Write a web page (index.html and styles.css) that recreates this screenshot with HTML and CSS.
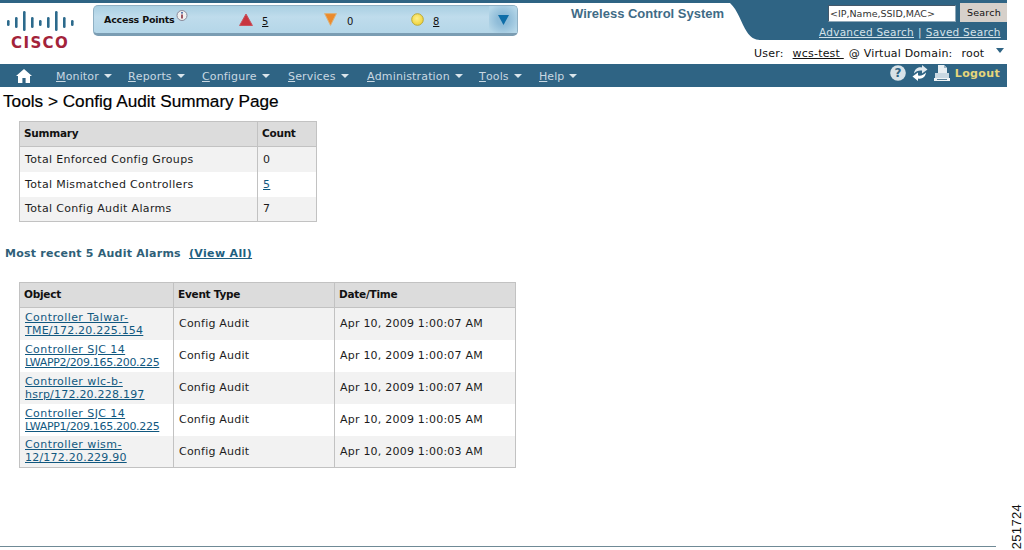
FILE: index.html
```html
<!DOCTYPE html>
<html lang="en">
<head>
<meta charset="utf-8">
<title>Config Audit Summary Page</title>
<link rel="stylesheet" href="styles.css">
</head>
<body>
<div class="page">
  <div class="main">
    <header class="header">
      <div class="logo">
        <svg class="logo-bars" width="70" height="24" viewBox="0 0 70 24">
          <g fill="#2c6a8c">
            <rect x="0" y="10" width="2.6" height="6" rx="1.3"/>
            <rect x="8" y="7" width="2.6" height="11" rx="1.3"/>
            <rect x="16" y="1" width="2.6" height="20" rx="1.3"/>
            <rect x="24" y="7" width="2.6" height="11" rx="1.3"/>
            <rect x="32" y="10" width="2.6" height="6" rx="1.3"/>
            <rect x="40" y="7" width="2.6" height="11" rx="1.3"/>
            <rect x="48" y="1" width="2.6" height="20" rx="1.3"/>
            <rect x="56" y="7" width="2.6" height="11" rx="1.3"/>
            <rect x="64" y="10" width="2.6" height="6" rx="1.3"/>
          </g>
        </svg>
        <div class="logo-text">CISCO</div>
      </div>
      <div class="alerts">
        <span class="alerts-title">Access Points</span>
        <svg class="info-icon" width="12" height="12" viewBox="0 0 12 12">
          <circle cx="6" cy="5.500" r="5" fill="#f0f0f0" stroke="#8a8a9a"/>
          <rect x="5.200" y="4.500" width="1.600" height="4" fill="#8a3040"/>
          <rect x="5.200" y="2" width="1.600" height="1.600" fill="#3a5a9a"/>
        </svg>
        <svg class="alert-icon first" width="14" height="13" viewBox="0 0 14 13">
          <path d="M7 1 13.400 12.500H.6Z" fill="#c8343f" stroke="#c8505a" stroke-linejoin="round"/>
        </svg>
        <a class="alert-count" href="#">5</a>
        <svg class="alert-icon second" width="13" height="13" viewBox="0 0 13 13">
          <path d="M.6.6H12.400L6.500 12.400Z" fill="#ec8a2c" stroke="#dcb27a" stroke-linejoin="round"/>
        </svg>
        <span class="alert-count plain">0</span>
        <svg class="alert-icon third" width="13" height="13" viewBox="0 0 13 13">
          <defs><radialGradient id="sun" cx=".45" cy=".4" r=".6"><stop offset="0" stop-color="#fff08a"/><stop offset="1" stop-color="#efd23a"/></radialGradient></defs>
          <circle cx="6.500" cy="6.500" r="5.800" fill="url(#sun)" stroke="#b8a83a"/>
        </svg>
        <a class="alert-count" href="#">8</a>
        <div class="alerts-toggle">
          <svg width="11" height="10" viewBox="0 0 11 10"><path d="M0 0H11L5.500 10Z" fill="#0f6ea8"/></svg>
        </div>
      </div>
      <div class="product">Wireless Control System</div>
      <div class="tools">
        <div class="search-panel">
          <svg class="curve" width="30" height="37" viewBox="0 0 30 37" preserveAspectRatio="none">
            <path d="M0 0C8 7 11 20 17 29 20 34 25 37 30 37V0Z" fill="#2f6484"/>
          </svg>
          <div class="search-body">
            <div class="search-row">
              <input class="search-input" type="text" value="&lt;IP,Name,SSID,MAC&gt;">
              <button class="search-button" type="button">Search</button>
            </div>
            <div class="search-links">
              <a href="#">Advanced Search</a><span class="sep">|</span><a href="#">Saved Search</a>
            </div>
          </div>
        </div>
        <div class="user-line">
          <span>User:</span>
          <a class="user-name" href="#">wcs-test </a>
          <span>@ Virtual Domain:</span>
          <span class="domain">root</span>
          <svg class="domain-arrow" width="8" height="5" viewBox="0 0 8 5"><path d="M0 0H8L4 5Z" fill="#2f6484"/></svg>
        </div>
      </div>
    </header>

    <nav class="nav">
      <svg class="home" width="16" height="14" viewBox="0 0 16 14">
        <path d="M8 0 16 7H14V14H9.600V9H6.400V14H2V7H0Z" fill="#fff"/>
      </svg>
      <ul class="menu">
        <li class="m-monitor"><u>M</u>onitor<i></i></li>
        <li class="m-reports"><u>R</u>eports<i></i></li>
        <li class="m-configure"><u>C</u>onfigure<i></i></li>
        <li class="m-services"><u>S</u>ervices<i></i></li>
        <li class="m-admin"><u>A</u>dministration<i></i></li>
        <li class="m-tools"><u>T</u>ools<i></i></li>
        <li class="m-help"><u>H</u>elp<i></i></li>
      </ul>
      <div class="nav-right">
        <svg width="16" height="16" viewBox="0 0 16 16">
          <circle cx="8" cy="8" r="7.800" fill="#d8e2e8"/>
          <text x="8" y="12.400" text-anchor="middle" class="help-mark">?</text>
        </svg>
        <svg width="16" height="16" viewBox="0 0 16 16">
          <path d="M2 8.500C2.500 4 6 1.500 10 2.500V0L15.500 4.500 10 8.500V5.500C7 5 4 6 2 8.500Z" fill="#dfe8ee"/>
          <path d="M14 7.500C13.500 12 10 14.500 6 13.500V16L.5 11.500 6 7.500V10.500C9 11 12 10 14 7.500Z" fill="#fff"/>
        </svg>
        <svg width="16" height="16" viewBox="0 0 16 16">
          <path d="M4 0H10L13 3V8H4Z" fill="#e8eef2"/>
          <path d="M10 0V3H13Z" fill="#9fb6c6"/>
          <path d="M1 8H15V13H1Z" fill="#c9d8e2"/>
          <path d="M0 13H16V16H0Z" fill="#f0f4f6"/>
          <path d="M3 14.500H13" stroke="#5a7f98"/>
        </svg>
        <a class="logout" href="#">Logout</a>
      </div>
    </nav>

    <h1 class="title">Tools &gt; Config Audit Summary Page</h1>

    <table class="grid summary">
      <colgroup><col class="c-summary"><col class="c-count"></colgroup>
      <thead><tr><th>Summary</th><th>Count</th></tr></thead>
      <tbody>
        <tr><td>Total Enforced Config Groups</td><td>0</td></tr>
        <tr><td>Total Mismatched Controllers</td><td><a href="#">5</a></td></tr>
        <tr><td>Total Config Audit Alarms</td><td>7</td></tr>
      </tbody>
    </table>

    <h2 class="section">Most recent 5 Audit Alarms <a href="#">(View All)</a></h2>

    <table class="grid alarms">
      <colgroup><col class="c-object"><col class="c-event"><col class="c-date"></colgroup>
      <thead><tr><th>Object</th><th>Event Type</th><th>Date/Time</th></tr></thead>
      <tbody>
        <tr><td><a href="#"><span class="name">Controller Talwar-</span><br>TME/172.20.225.154</a></td><td>Config Audit</td><td>Apr 10, 2009 1:00:07 AM</td></tr>
        <tr><td><a href="#"><span class="name">Controller SJC 14</span><br><span class="tight">LWAPP2/209.165.200.225</span></a></td><td>Config Audit</td><td>Apr 10, 2009 1:00:07 AM</td></tr>
        <tr><td><a href="#"><span class="name">Controller wlc-b-</span><br>hsrp/172.20.228.197</a></td><td>Config Audit</td><td>Apr 10, 2009 1:00:07 AM</td></tr>
        <tr><td><a href="#"><span class="name">Controller SJC 14</span><br><span class="tight">LWAPP1/209.165.200.225</span></a></td><td>Config Audit</td><td>Apr 10, 2009 1:00:05 AM</td></tr>
        <tr><td><a href="#"><span class="name">Controller wism-</span><br>12/172.20.229.90</a></td><td>Config Audit</td><td>Apr 10, 2009 1:00:03 AM</td></tr>
      </tbody>
    </table>
  </div>
  <footer class="footer">
    <div class="rule"></div>
    <div class="figure-id">251724</div>
  </footer>
</div>
</body>
</html>
```
FILE: styles.css
```css
* { box-sizing: border-box; }
html, body { margin: 0; padding: 0; background: #fff; }
body { font-family: "DejaVu Sans", Verdana, sans-serif; font-size: 11px; color: #1c1c1c; }
.page { width: 1024px; height: 550px; overflow: hidden; display: flex; flex-direction: column; }
.main { width: 1007px; flex: 1; }

.header { height: 64px; display: flex; border-top: 3px solid #2f6484; }
.logo { width: 93px; padding: 7px 0 0 7px; }
.logo-bars { display: block; }
.logo-text { margin: 2px 0 0 4px; font: bold 15px/14px "DejaVu Sans", sans-serif; letter-spacing: 1.4px; color: #a3233a; }

.alerts { width: 425px; height: 31px; margin-top: 2px; display: flex; align-items: center;
  border-radius: 5px; border: 1px solid #8fb0c4; border-bottom: 3px solid #7b9db3;
  background: linear-gradient(#a9cfe2, #bfdcec 40%, #b4d6e8); padding-left: 10px; font-size: 10px; }
.alerts-title { font: bold 9.5px "DejaVu Sans", sans-serif; letter-spacing: -.22px; width: 71px; white-space: nowrap; color: #111; }
.info-icon { margin: -8px 0 0 1px; }
.alert-icon.first { margin-left: 51px; }
.alert-icon.second { margin-left: 54px; }
.alert-icon.third { margin-left: 56px; }
.alert-count { margin-left: 9px; width: 8px; color: #111; margin-top: 3px; }
.alert-count.plain { margin-left: 10px; }
.alerts-toggle { margin-left: auto; width: 28px; height: 27px; display: flex; align-items: center; justify-content: center;
  background: radial-gradient(circle at 50% 50%, #8fbcd8 30%, #b4d6e8 85%); border-radius: 0 4px 0 0; }

.product { width: 212px; padding: 2px 0 0 53px; font: bold 13px/17px "Liberation Sans", Arial, sans-serif; color: #3f6b86; white-space: nowrap; }

.tools { width: 277px; display: flex; flex-direction: column; }
.search-panel { height: 37px; display: flex; }
.curve { flex: none; margin-right: -1px; }
.search-body { flex: 1; background: #2f6484; padding-left: 69px; }
.search-row { display: flex; height: 19px; align-items: flex-start; }
.search-input { width: 128px; height: 17px; margin: 2px 0 0 0; padding: 0 2px 0 1px; border: 1px solid #8fa8b8; border-top-color: #44586a; border-left-color: #44586a; background: #fff; font: 9.5px "DejaVu Sans", sans-serif; color: #333; }
.search-button { width: 47px; height: 19px; margin-left: 4px; padding: 0 0 0 1px; border: 0; background: #d6d0ca; font: 9.5px "DejaVu Sans", sans-serif; letter-spacing: .2px; color: #111; }
.search-links { margin: 4px 0 0 -9px; font-size: 10.5px; line-height: 13px; letter-spacing: .25px; white-space: nowrap; color: #d4e2ea; }
.search-links a { color: #d4e2ea; }
.sep { margin: 0 4px; }
.user-line { display: flex; align-items: center; margin-top: 6px; height: 14px; padding-left: 24px; white-space: nowrap; letter-spacing: .2px; color: #111; }
.user-name { margin-left: 9px; margin-right: 5px; color: #111; white-space: pre; }
.domain { margin-left: 9px; }
.domain-arrow { margin: -6px 0 0 12px; }

.nav { height: 23px; background: #2f6484; display: flex; align-items: center; color: #c9d8e2; }
.home { margin-left: 16px; flex: none; }
.menu { list-style: none; margin: 1px 0 0 24px; padding: 0; display: flex; letter-spacing: .15px; }
.menu li { display: flex; align-items: center; white-space: nowrap; }
.menu i { display: block; margin-left: 5px; width: 0; height: 0; border: 4px solid transparent; border-top: 4px solid #dbe6ec; border-bottom: 0; }
.m-monitor { width: 72px; }
.m-reports { width: 74px; }
.m-configure { width: 86px; }
.m-services { width: 79px; }
.m-admin { width: 112px; }
.m-tools { width: 60px; }
.m-help { width: 50px; letter-spacing: .05px; }
.nav-right { margin-left: auto; display: flex; align-items: center; gap: 6px; padding: 0 7px 5px 0; }
.help-mark { font: bold 12px "DejaVu Sans", sans-serif; fill: #2f6484; }
.logout { margin-left: -1px; font-weight: bold; font-size: 11px; color: #e6d67a; text-decoration: none; letter-spacing: .35px; }

.title { margin: 4px 0 0 3px; font: 400 17.2px/20px "Liberation Sans", Arial, sans-serif; -webkit-text-stroke: .2px #000; color: #000; }

.grid { border-collapse: collapse; table-layout: fixed; margin-left: 19px; border: 1px solid #c2c2c2; }
.grid th { background: #dcdcdc; font: bold 10.5px "DejaVu Sans", sans-serif; letter-spacing: -.25px; text-align: left; padding: 0 5px 2px 4px; height: 25px; border: 1px solid #c2c2c2; color: #111; }
.grid td { padding: 0 5px; border-left: 1px solid #c2c2c2; border-right: 1px solid #c2c2c2; letter-spacing: .22px; white-space: nowrap; }
.grid tbody tr:nth-child(odd) td { background: #f2f2f2; }
.grid a { color: #11587f; }
.summary { width: 297px; margin-top: 10px; }
.summary td { height: 25px; letter-spacing: .33px; }
.c-summary { width: 238px; }
.c-count { width: 59px; }
.alarms { width: 496px; }
.alarms td { height: 32px; line-height: 13px; }
.name { letter-spacing: .42px; }
.tight { letter-spacing: -.32px; }
.c-object { width: 154px; }
.c-event { width: 161px; }
.c-date { width: 181px; }

.section { margin: 25px 0 21px 5px; font: bold 11px/14px "DejaVu Sans", sans-serif; letter-spacing: .24px; color: #2f5f78; }
.section a { margin-left: 4px; color: #1f5f80; letter-spacing: .35px; }

.footer { height: 47px; display: flex; align-items: flex-end; flex: none; }
.rule { width: 996px; height: 1px; margin-bottom: 3px; background: #6f8a96; }
.figure-id { margin: 0 0 1px 14px; writing-mode: vertical-rl; transform: rotate(180deg); font: 13px/14px "Liberation Sans", Arial, sans-serif; letter-spacing: .3px; color: #111; }
```
